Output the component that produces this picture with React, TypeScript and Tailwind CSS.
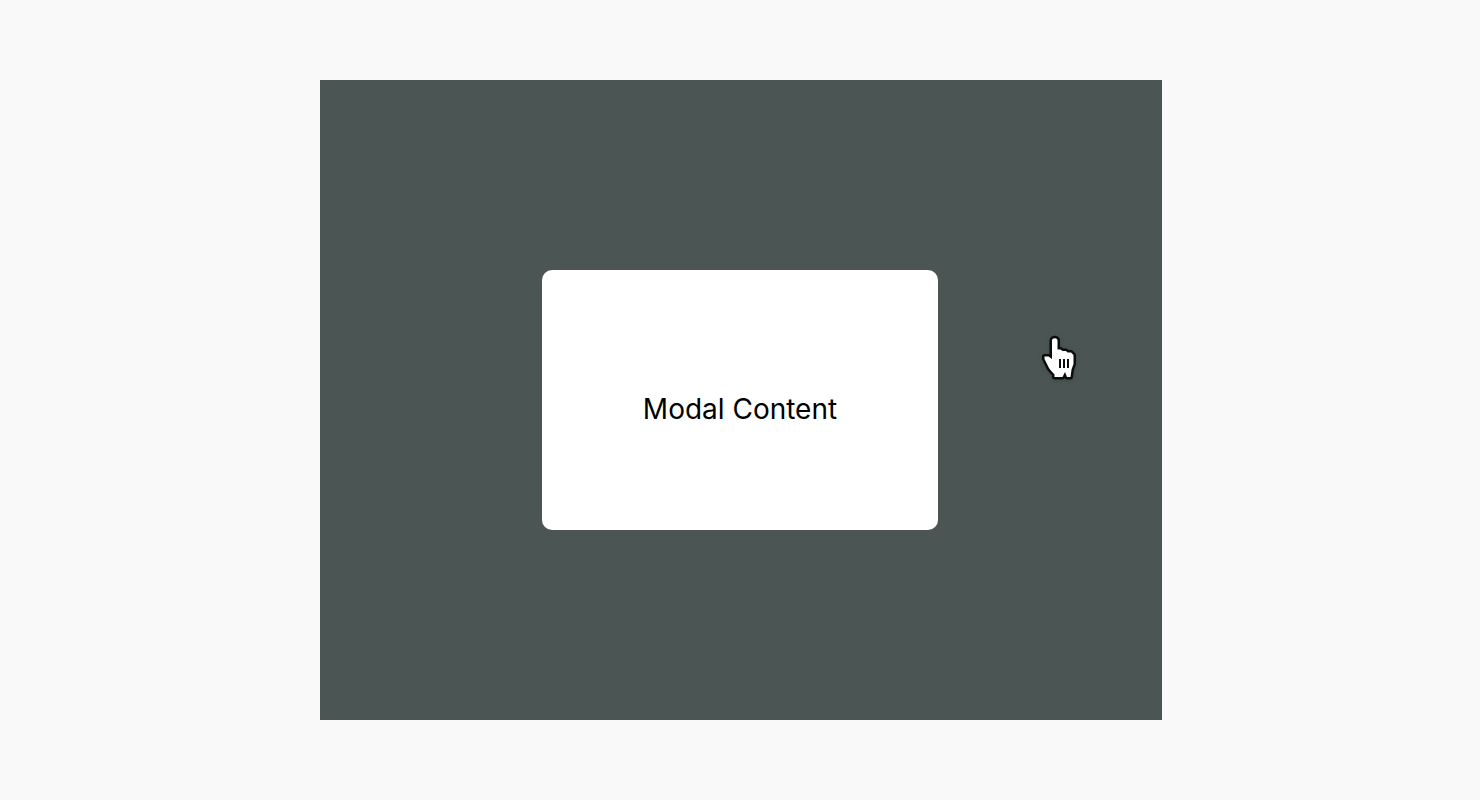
import React from 'react';

const HandCursor: React.FC = () => {
  return (
    <svg
      className="absolute top-[250px] right-[78px] h-14 w-[50px] drop-shadow-sm"
      viewBox="0 0 50 56"
      aria-hidden="true"
    >
      <path
        d="M18 29V10.5C18 7.6 23.5 7.6 23.5 10.5V19.5H26.5L28.5 21H32L33.5 22.5H37L39.5 25V34L37.5 39.5L36.5 47H33L31 42L28.5 47H20.5V44.5C18.5 42 16.5 40.5 15 38L12.5 33L10.5 29V26.5H14.5Z"
        fill="white"
        stroke="#0b0d0c"
        strokeWidth="5"
        strokeLinejoin="round"
        paintOrder="stroke"
      />
      <path d="M26 29V38M30 29V38M34 29V38" fill="none" stroke="#0b0d0c" strokeWidth="2" />
    </svg>
  );
};

interface ModalProps {
  children: React.ReactNode;
}

const Modal: React.FC<ModalProps> = ({ children }) => {
  return (
    <div
      role="dialog"
      aria-modal="true"
      aria-label="Modal"
      className="flex min-h-[260px] w-[396px] items-center justify-center rounded-[10px] bg-white px-6 pt-[18px]"
    >
      {children}
    </div>
  );
};

const App: React.FC = () => {
  return (
    <div className="flex min-h-screen flex-col bg-[#f9f9f9] py-20 pr-[318px] pl-80 font-['Inter',sans-serif]">
      <main className="relative flex flex-1 items-center justify-center bg-[#4b5553] pr-0.5">
        <Modal>
          <p className="text-[28px] leading-10 text-black">Modal Content</p>
        </Modal>
        <HandCursor />
      </main>
    </div>
  );
};

export default App;
